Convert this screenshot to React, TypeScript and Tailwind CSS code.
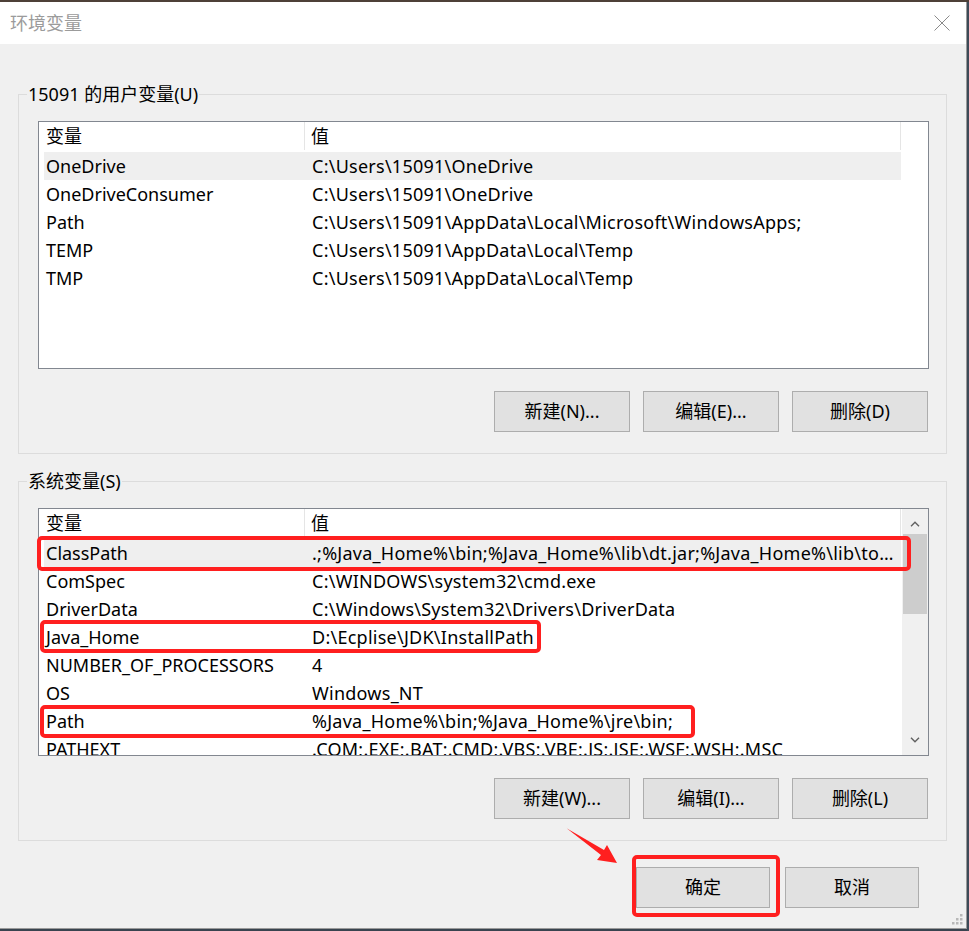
import React from "react";

type Row = [string, string];

const USER_ROWS: Row[] = [
  ["OneDrive", "C:\\Users\\15091\\OneDrive"],
  ["OneDriveConsumer", "C:\\Users\\15091\\OneDrive"],
  ["Path", "C:\\Users\\15091\\AppData\\Local\\Microsoft\\WindowsApps;"],
  ["TEMP", "C:\\Users\\15091\\AppData\\Local\\Temp"],
  ["TMP", "C:\\Users\\15091\\AppData\\Local\\Temp"],
];

const SYSTEM_ROWS: Row[] = [
  ["ClassPath", ".;%Java_Home%\\bin;%Java_Home%\\lib\\dt.jar;%Java_Home%\\lib\\tools.jar"],
  ["ComSpec", "C:\\WINDOWS\\system32\\cmd.exe"],
  ["DriverData", "C:\\Windows\\System32\\Drivers\\DriverData"],
  ["Java_Home", "D:\\Ecplise\\JDK\\InstallPath"],
  ["NUMBER_OF_PROCESSORS", "4"],
  ["OS", "Windows_NT"],
  ["Path", "%Java_Home%\\bin;%Java_Home%\\jre\\bin;"],
  ["PATHEXT", ".COM;.EXE;.BAT;.CMD;.VBS;.VBE;.JS;.JSE;.WSF;.WSH;.MSC"],
];

function Chevron({ up }: { up?: boolean }) {
  return (
    <svg width="10" height="6" viewBox="0 0 10 6" fill="none">
      <path
        d={up ? "M1 5.2 L5 1.2 L9 5.2" : "M1 0.8 L5 4.8 L9 0.8"}
        stroke="#606060"
        strokeWidth="1.4"
      />
    </svg>
  );
}

function ListView({ rows, scroll }: { rows: Row[]; scroll?: boolean }) {
  return (
    <div className="ml-[19px] mr-[17px] mt-[15px] flex h-[248px] overflow-hidden border border-[#828790] bg-white">
      <div className="flex w-[863px] flex-col">
        <div className="flex h-[28px] shrink-0 items-center">
          <div className="flex h-full w-[266px] items-center border-r border-[#e5e5e5] pl-[7px]">变量</div>
          <div className="flex h-full w-[596px] items-center border-r border-[#e5e5e5] pl-[6px]">值</div>
        </div>
        <div className="flex flex-col pt-[2px]">
          {rows.map(([name, value], i) => (
            <div
              key={name + i}
              className={
                "ml-[5px] flex h-[28px] w-[857px] shrink-0 items-center " +
                (i === 0 ? "bg-[#efefef]" : "")
              }
            >
              <div className="w-[261px] shrink-0 whitespace-nowrap pl-[2px]">{name}</div>
              <div className="min-w-0 flex-1 truncate pl-[7px] pr-[2px] tracking-[0.25px]">{value}</div>
            </div>
          ))}
        </div>
      </div>
      {scroll ? (
        <div className="flex w-[26px] flex-col bg-[#f0f0f0]">
          <div className="flex h-[25px] items-center justify-center pt-[4px]">
            <Chevron up />
          </div>
          <div className="mx-[1px] h-[80px] bg-[#cdcdcd]" />
          <div className="flex-1" />
          <div className="flex h-[28px] items-center justify-center pb-[2px]">
            <Chevron />
          </div>
        </div>
      ) : (
        <div className="w-[26px]" />
      )}
    </div>
  );
}

function Btn({ children, className = "" }: { children: React.ReactNode; className?: string }) {
  return (
    <button
      type="button"
      className={
        "flex h-[41px] items-center justify-center border border-[#adadad] bg-[#e1e1e1] text-[18px] text-black " +
        className
      }
    >
      {children}
    </button>
  );
}

function Group({
  label,
  rows,
  scroll,
  buttons,
  className = "",
}: {
  label: string;
  rows: Row[];
  scroll?: boolean;
  buttons: string[];
  className?: string;
}) {
  return (
    <fieldset className={"border border-[#dcdcdc] pb-[21px] " + className}>
      <legend className="ml-[8px] px-[1px] text-[18px] leading-[24px]">{label}</legend>
      <ListView rows={rows} scroll={scroll} />
      <div className="mr-[18px] mt-[22px] flex justify-end gap-[13px]">
        {buttons.map((b) => (
          <Btn key={b} className="w-[136px]">
            {b}
          </Btn>
        ))}
      </div>
    </fieldset>
  );
}

export default function App() {
  return (
    <div className="relative flex h-[931px] w-[969px] flex-col overflow-hidden bg-[#39434f] font-['Noto_Sans','Noto_Sans_CJK_SC',sans-serif] text-[18px] text-black">
      <div className="h-[2px] bg-[#4d4038]" />
      <div className="flex flex-1">
        <div className="relative flex h-[927px] w-[967px] flex-col border-b border-r border-[#9a9a9a] bg-[#f0f0f0]">
          {/* title bar */}
          <div className="flex h-[42px] shrink-0 items-center justify-between bg-white pl-[10px] pr-[16px]">
            <span className="text-[18px] text-[#9b9b9b]">环境变量</span>
            <svg width="16" height="16" viewBox="0 0 16 16" fill="none">
              <path d="M0.5 0.5 L15.5 15.5 M15.5 0.5 L0.5 15.5" stroke="#8a8a8a" strokeWidth="1" />
            </svg>
          </div>

          <div className="flex flex-col pl-[18px] pr-[19px] pt-[38px]">
            <Group
              label="15091 的用户变量(U)"
              rows={USER_ROWS}
              buttons={["新建(N)...", "编辑(E)...", "删除(D)"]}
            />
            <Group
              label="系统变量(S)"
              rows={SYSTEM_ROWS}
              scroll
              buttons={["新建(W)...", "编辑(I)...", "删除(L)"]}
              className="mt-[15px]"
            />
            <div className="mr-[28px] mt-[26px] flex justify-end gap-[15px]">
              <Btn className="w-[134px]">确定</Btn>
              <Btn className="w-[134px]">取消</Btn>
            </div>
          </div>

          {/* size grip */}
          <svg className="absolute bottom-[3px] right-[3px]" width="12" height="12" viewBox="0 0 12 12">
            <g fill="#b8b8b8">
              <rect x="9" y="1" width="2.5" height="2.5" />
              <rect x="5" y="5" width="2.5" height="2.5" />
              <rect x="9" y="5" width="2.5" height="2.5" />
              <rect x="1" y="9" width="2.5" height="2.5" />
              <rect x="5" y="9" width="2.5" height="2.5" />
              <rect x="9" y="9" width="2.5" height="2.5" />
            </g>
          </svg>
        </div>
        <div className="flex-1 bg-[#3d4a57]" />
      </div>

      {/* red annotations */}
      <div className="pointer-events-none absolute left-[37px] top-[536px] h-[35px] w-[874px] rounded-[5px] border-[4px] border-[#ff1f1f]" />
      <div className="pointer-events-none absolute left-[40px] top-[620px] h-[33px] w-[501px] rounded-[5px] border-[4px] border-[#ff1f1f]" />
      <div className="pointer-events-none absolute left-[40px] top-[705px] h-[33px] w-[655px] rounded-[5px] border-[4px] border-[#ff1f1f]" />
      <div className="pointer-events-none absolute left-[632px] top-[855px] h-[62px] w-[148px] rounded-[5px] border-[4px] border-[#ff1f1f]" />
      <svg className="pointer-events-none absolute left-[560px] top-[820px]" width="62" height="48" viewBox="0 0 62 48">
        <polygon points="5,7 7,8.5 44,30 47,25 57,43 37,40 41,35" fill="#ff1f1f" />
      </svg>
    </div>
  );
}
